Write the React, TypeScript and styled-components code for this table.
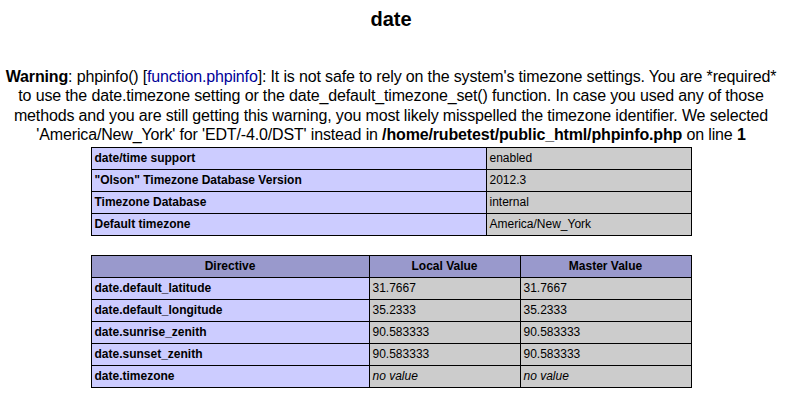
import styled, { createGlobalStyle } from 'styled-components';

const GlobalStyle = createGlobalStyle`
  html, body {
    margin: 0;
    padding: 0;
    background: #ffffff;
    color: #000000;
  }
`;

const Page = styled.div`
  width: 785px;
  padding: 8px 3px 0 0;
  box-sizing: border-box;
  text-align: center;
  font-family: 'Liberation Sans', Arial, sans-serif;
`;

const Title = styled.h2`
  margin: 0;
  font-size: 20px;
  line-height: 23px;
  font-weight: bold;
`;

// the reference was rendered with narrower glyph advances, so break lines by hand
const Warning = styled.div`
  margin-top: 36px;
  font-size: 16px;
  line-height: 19.33px;
  letter-spacing: -0.15px;
  white-space: nowrap;
`;

const Link = styled.a`
  color: #000099;
  text-decoration: none;
`;

const InfoTable = styled.table<{ gap: number }>`
  margin: ${(p) => p.gap}px auto 0;
  width: 600px;
  border-collapse: collapse;
  table-layout: fixed;
  text-align: left;
`;

const Cell = styled.td<{ kind: 'e' | 'v' | 'h' }>`
  border: 1px solid #000000;
  padding: 3px;
  font-size: 12px;
  line-height: 15px;
  white-space: nowrap;
  overflow: hidden;
  background: ${(p) => (p.kind === 'e' ? '#ccccff' : p.kind === 'h' ? '#9999cc' : '#cccccc')};
  font-weight: ${(p) => (p.kind === 'v' ? 'normal' : 'bold')};
  text-align: ${(p) => (p.kind === 'h' ? 'center' : 'left')};
`;

const NoValue = styled.i``;

const support: [string, string][] = [
  ['date/time support', 'enabled'],
  ['"Olson" Timezone Database Version', '2012.3'],
  ['Timezone Database', 'internal'],
  ['Default timezone', 'America/New_York'],
];

const directives: [string, string | null][] = [
  ['date.default_latitude', '31.7667'],
  ['date.default_longitude', '35.2333'],
  ['date.sunrise_zenith', '90.583333'],
  ['date.sunset_zenith', '90.583333'],
  ['date.timezone', null],
];

const Value = ({ v }: { v: string | null }) => (v === null ? <NoValue>no value</NoValue> : <>{v}</>);

export default function App() {
  return (
    <>
      <GlobalStyle />
      <Page>
        <Title>date</Title>
        <Warning>
          <b>Warning</b>: phpinfo() [<Link href="#">function.phpinfo</Link>]: It is not safe to rely on the
          system's timezone settings. You are *required*
          <br />
          to use the date.timezone setting or the date_default_timezone_set() function. In case you used any of
          those
          <br />
          methods and you are still getting this warning, you most likely misspelled the timezone identifier. We
          selected
          <br />
          'America/New_York' for 'EDT/-4.0/DST' instead in <b>/home/rubetest/public_html/phpinfo.php</b> on
          line <b>1</b>
        </Warning>
        <InfoTable gap={3}>
          <colgroup>
            <col style={{ width: 395 }} />
            <col style={{ width: 205 }} />
          </colgroup>
          <tbody>
            {support.map(([k, v]) => (
              <tr key={k}>
                <Cell kind="e">{k}</Cell>
                <Cell kind="v">{v}</Cell>
              </tr>
            ))}
          </tbody>
        </InfoTable>
        <InfoTable gap={19}>
          <colgroup>
            <col style={{ width: 278 }} />
            <col style={{ width: 151 }} />
            <col style={{ width: 171 }} />
          </colgroup>
          <tbody>
            <tr>
              <Cell as="th" kind="h">Directive</Cell>
              <Cell as="th" kind="h">Local Value</Cell>
              <Cell as="th" kind="h">Master Value</Cell>
            </tr>
            {directives.map(([k, v]) => (
              <tr key={k}>
                <Cell kind="e">{k}</Cell>
                <Cell kind="v"><Value v={v} /></Cell>
                <Cell kind="v"><Value v={v} /></Cell>
              </tr>
            ))}
          </tbody>
        </InfoTable>
      </Page>
    </>
  );
}
